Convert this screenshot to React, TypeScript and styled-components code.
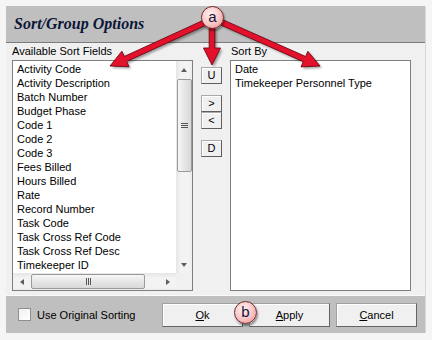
import React from "react";
import styled, { createGlobalStyle } from "styled-components";

const availableFields = [
  "Activity Code",
  "Activity Description",
  "Batch Number",
  "Budget Phase",
  "Code 1",
  "Code 2",
  "Code 3",
  "Fees Billed",
  "Hours Billed",
  "Rate",
  "Record Number",
  "Task Code",
  "Task Cross Ref Code",
  "Task Cross Ref Desc",
  "Timekeeper ID",
];

const sortByFields = ["Date", "Timekeeper Personnel Type"];

type Pt = [number, number];

// builds an arrow outline (shaft + head) between two points
const arrowPoints = (from: Pt, to: Pt, shaft = 2.8, headW = 8.5, headL = 17) => {
  const [x1, y1] = from;
  const [x2, y2] = to;
  const len = Math.hypot(x2 - x1, y2 - y1);
  const ux = (x2 - x1) / len;
  const uy = (y2 - y1) / len;
  const nx = -uy;
  const ny = ux;
  const bx = x2 - ux * headL;
  const by = y2 - uy * headL;
  const pts: Pt[] = [
    [x1 + nx * shaft, y1 + ny * shaft],
    [bx + nx * shaft, by + ny * shaft],
    [bx + nx * headW, by + ny * headW],
    [x2, y2],
    [bx - nx * headW, by - ny * headW],
    [bx - nx * shaft, by - ny * shaft],
    [x1 - nx * shaft, y1 - ny * shaft],
  ];
  return pts.map((p) => `${p[0].toFixed(1)},${p[1].toFixed(1)}`).join(" ");
};

const arrows: [Pt, Pt][] = [
  [[204, 23], [110, 66]],
  [[212, 27], [212, 65]],
  [[221, 22], [320, 66]],
];

type Dir = "up" | "down" | "left" | "right";

const App: React.FC = () => {
  return (
    <Page>
      <GlobalStyle />
      <Dialog>
        <Header>
          <Title>Sort/Group Options</Title>
        </Header>
        <Body>
          <FieldLabel>Available Sort Fields</FieldLabel>
          <span />
          <FieldLabel $indent>Sort By</FieldLabel>

          <ListBox $scroll>
            <Items>
              {availableFields.map((f) => (
                <Item key={f}>{f}</Item>
              ))}
            </Items>
            <VScroll>
              <ScrollButton>
                <Tri $dir="up" />
              </ScrollButton>
              <VThumb>
                <Grip />
              </VThumb>
              <Spacer />
              <ScrollButton>
                <Tri $dir="down" />
              </ScrollButton>
            </VScroll>
            <HScroll>
              <ScrollButton $wide>
                <Tri $dir="left" />
              </ScrollButton>
              <HThumb>
                <Grip $horizontal />
              </HThumb>
              <Spacer />
              <ScrollButton $wide>
                <Tri $dir="right" />
              </ScrollButton>
            </HScroll>
            <Corner />
          </ListBox>

          <MoveColumn>
            <SmallButton>U</SmallButton>
            <ButtonPair>
              <SmallButton>&gt;</SmallButton>
              <SmallButton>&lt;</SmallButton>
            </ButtonPair>
            <SmallButton>D</SmallButton>
          </MoveColumn>

          <ListBox>
            <Items>
              {sortByFields.map((f) => (
                <Item key={f}>{f}</Item>
              ))}
            </Items>
          </ListBox>
        </Body>
        <Footer>
          <CheckRow>
            <CheckBox />
            Use Original Sorting
          </CheckRow>
          <ButtonRow>
            <PushButton>
              <u>O</u>k
            </PushButton>
            <PushButton>
              <u>A</u>pply
            </PushButton>
            <PushButton>
              <u>C</u>ancel
            </PushButton>
          </ButtonRow>
        </Footer>
      </Dialog>

      <Overlay width={432} height={340} viewBox="0 0 432 340">
        <defs>
          <filter id="soft" x="-20%" y="-20%" width="140%" height="140%">
            <feGaussianBlur stdDeviation="1" />
          </filter>
        </defs>
        {arrows.map(([a, b], i) => (
          <polygon
            key={`s${i}`}
            points={arrowPoints([a[0] + 2, a[1] + 2], [b[0] + 2, b[1] + 2])}
            fill="#000"
            opacity={0.35}
            filter="url(#soft)"
          />
        ))}
        {arrows.map(([a, b], i) => (
          <polygon
            key={`a${i}`}
            points={arrowPoints(a, b)}
            fill="#e3112c"
            stroke="#6e0710"
            strokeWidth={0.9}
            strokeLinejoin="round"
          />
        ))}
      </Overlay>
      <Badge $x={201} $y={6}>a</Badge>
      <Badge $x={234} $y={301}>b</Badge>
    </Page>
  );
};

const GlobalStyle = createGlobalStyle`
  html, body {
    margin: 0;
    padding: 0;
    background: #f5f5f5;
  }
  body {
    font-family: "Liberation Sans", Arial, sans-serif;
    font-size: 11px;
    color: #000;
  }
`;

const Page = styled.div`
  position: relative;
  width: 432px;
  height: 340px;
  padding: 6px;
  box-sizing: border-box;
  background: #f5f5f5;
`;

const Dialog = styled.div`
  width: 420px;
  background: #f0f0f0;
  border-right: 1px solid #d9d9d9;
  box-sizing: border-box;
`;

const Header = styled.div`
  height: 36px;
  display: flex;
  align-items: center;
  padding-left: 8px;
  background: #bfbfbf;
  border-bottom: 1px solid #7c7c7c;
`;

const Title = styled.div`
  font-family: "Liberation Serif", "Times New Roman", serif;
  font-weight: bold;
  font-style: italic;
  font-size: 16px;
  color: #0b1638;
`;

const Body = styled.div`
  display: grid;
  grid-template-columns: 181px 37px 181px;
  grid-template-rows: 14px 231px;
  row-gap: 2px;
  padding: 1px 0 4px 6px;
`;

const FieldLabel = styled.div<{ $indent?: boolean }>`
  line-height: 14px;
  padding-left: ${(p) => (p.$indent ? 1 : 0)}px;
  white-space: nowrap;
`;

const ListBox = styled.div<{ $scroll?: boolean }>`
  display: grid;
  grid-template-columns: ${(p) => (p.$scroll ? "1fr 16px" : "1fr")};
  grid-template-rows: ${(p) => (p.$scroll ? "1fr 17px" : "1fr")};
  border: 1px solid #7f7f7f;
  background: #fff;
  overflow: hidden;
`;

const Items = styled.div`
  padding: 1px 0 0 4px;
  overflow: hidden;
`;

const Item = styled.div`
  line-height: 14px;
  white-space: nowrap;
`;

const VScroll = styled.div`
  display: flex;
  flex-direction: column;
  align-items: center;
  background: linear-gradient(to right, #e6e6e6, #f3f3f3 30%, #f3f3f3 80%, #ececec);
`;

const HScroll = styled.div`
  display: flex;
  align-items: center;
  background: linear-gradient(to bottom, #e6e6e6, #f3f3f3 30%, #f3f3f3 80%, #ececec);
`;

const Corner = styled.div`
  background: #f0f0f0;
`;

const Spacer = styled.div`
  flex: 1;
`;

const ScrollButton = styled.div<{ $wide?: boolean }>`
  width: ${(p) => (p.$wide ? 17 : 16)}px;
  height: 17px;
  flex: none;
  display: flex;
  align-items: center;
  justify-content: center;
`;

const triBorders: Record<Dir, string> = {
  up: "border-width: 0 3.5px 4px; border-color: transparent transparent #5e5e5e;",
  down: "border-width: 4px 3.5px 0; border-color: #5e5e5e transparent transparent;",
  left: "border-width: 3.5px 4px 3.5px 0; border-color: transparent #5e5e5e transparent transparent;",
  right: "border-width: 3.5px 0 3.5px 4px; border-color: transparent transparent transparent #5e5e5e;",
};

const Tri = styled.span<{ $dir: Dir }>`
  width: 0;
  height: 0;
  border-style: solid;
  ${(p) => triBorders[p.$dir]}
`;

const VThumb = styled.div`
  width: 15px;
  height: 93px;
  margin-top: 1px;
  box-sizing: border-box;
  border: 1px solid #9a9a9a;
  border-radius: 2px;
  background: linear-gradient(to right, #f6f6f6, #e6e6e6 50%, #d8d8d8);
  display: flex;
  align-items: center;
  justify-content: center;
`;

const HThumb = styled.div`
  width: 114px;
  height: 15px;
  margin-left: 1px;
  box-sizing: border-box;
  border: 1px solid #9a9a9a;
  border-radius: 2px;
  background: linear-gradient(to bottom, #f6f6f6, #e6e6e6 50%, #d8d8d8);
  display: flex;
  align-items: center;
  justify-content: center;
`;

const Grip = styled.div<{ $horizontal?: boolean }>`
  width: ${(p) => (p.$horizontal ? 5 : 7)}px;
  height: ${(p) => (p.$horizontal ? 7 : 5)}px;
  background: repeating-linear-gradient(
    ${(p) => (p.$horizontal ? "to right" : "to bottom")},
    #555 0 1px,
    transparent 1px 2px
  );
`;

const MoveColumn = styled.div`
  display: flex;
  flex-direction: column;
  align-items: center;
  gap: 11px;
  padding-top: 7px;
`;

const ButtonPair = styled.div`
  display: flex;
  flex-direction: column;
`;

const SmallButton = styled.div`
  width: 21px;
  height: 17px;
  box-sizing: border-box;
  display: flex;
  align-items: center;
  justify-content: center;
  background: #f0f0f0;
  border: 1px solid;
  border-color: #a9a9a9 #5f5f5f #5f5f5f #a9a9a9;
  box-shadow: inset 1px 1px 0 #fff;
  font-size: 11px;
  line-height: 1;
`;

const Footer = styled.div`
  height: 38px;
  display: flex;
  align-items: center;
  padding: 0 8px 0 12px;
  background: #bfbfbf;
  border-top: 1px solid #fafafa;
  box-sizing: border-box;
`;

const CheckRow = styled.label`
  display: flex;
  align-items: center;
  gap: 6px;
  white-space: nowrap;
`;

const CheckBox = styled.span`
  width: 13px;
  height: 13px;
  box-sizing: border-box;
  border: 1px solid #8e8f8f;
  background: linear-gradient(135deg, #f0f0f0, #fff);
`;

const ButtonRow = styled.div`
  display: flex;
  gap: 6px;
  margin-left: auto;
`;

const PushButton = styled.button`
  width: 81px;
  height: 24px;
  padding: 0;
  font-family: "Liberation Sans", Arial, sans-serif;
  font-size: 11px;
  color: #000;
  background: #f0f0f0;
  border: 1px solid;
  border-color: #a0a0a0 #646464 #646464 #a0a0a0;
  box-shadow: inset 1px 1px 0 #fff;
`;

const Overlay = styled.svg`
  position: absolute;
  left: 0;
  top: 0;
  pointer-events: none;
`;

const Badge = styled.div<{ $x: number; $y: number }>`
  position: absolute;
  left: ${(p) => p.$x}px;
  top: ${(p) => p.$y}px;
  width: 23px;
  height: 23px;
  box-sizing: border-box;
  border-radius: 50%;
  border: 1px solid #6e2828;
  background: radial-gradient(circle at 40% 35%, #fff2f2 0%, #f9c8c8 50%, #e98a8a 100%);
  box-shadow: 1px 2px 2px rgba(0, 0, 0, 0.4);
  display: flex;
  align-items: center;
  justify-content: center;
  padding-bottom: 3px;
  font-family: "Liberation Sans", Arial, sans-serif;
  font-size: 15px;
  color: #14143a;
`;

export default App;
